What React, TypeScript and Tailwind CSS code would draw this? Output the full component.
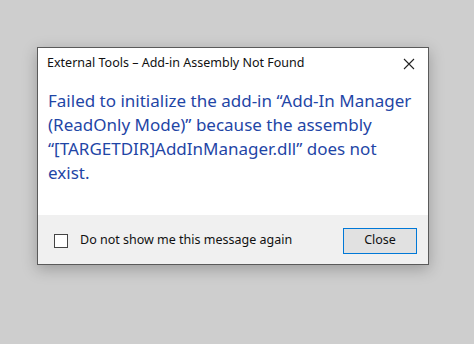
export default function App(): JSX.Element {
  return (
    <div className="h-[344px] w-[474px] overflow-hidden bg-[#cecece] pl-[37px] pt-[47px] font-['Noto_Sans',sans-serif]">
      <div className="flex h-[218px] w-[392px] flex-col border border-[#5a5a5a] bg-white shadow-[0_4px_14px_rgba(0,0,0,0.25)]">
        {/* title bar */}
        <div className="flex h-[31px] items-center justify-between pl-[9px] pr-[13px]">
          <span className="text-[12.5px] text-[#111]">External Tools – Add-in Assembly Not Found</span>
          <svg width="12" height="12" viewBox="0 0 12 12" aria-hidden="true">
            <path d="M1 1L11 11M11 1L1 11" stroke="#222" strokeWidth="1.1" />
          </svg>
        </div>

        {/* message */}
        <div className="flex-1 pl-[10px] pr-[10px] pt-[10px]">
          <p className="text-[17px] leading-[24px] text-[#1f46a6]">
            Failed to initialize the add-in “Add-In Manager (ReadOnly Mode)” because the assembly
            “[TARGETDIR]AddInManager.dll” does not exist.
          </p>
        </div>

        {/* footer */}
        <div className="flex h-[49px] items-center justify-between bg-[#f0f0f0] pl-[16px] pr-[11px] pt-[2px]">
          <label className="flex items-center gap-[12px]">
            <span className="h-[14px] w-[14px] border border-[#444] bg-white" />
            <span className="text-[12.5px] text-[#111]">Do not show me this message again</span>
          </label>
          <button
            type="button"
            className="h-[26px] w-[74px] border border-[#0078d7] bg-[#e1e1e1] text-[12.5px] text-[#111]"
          >
            Close
          </button>
        </div>
      </div>
    </div>
  )
}
